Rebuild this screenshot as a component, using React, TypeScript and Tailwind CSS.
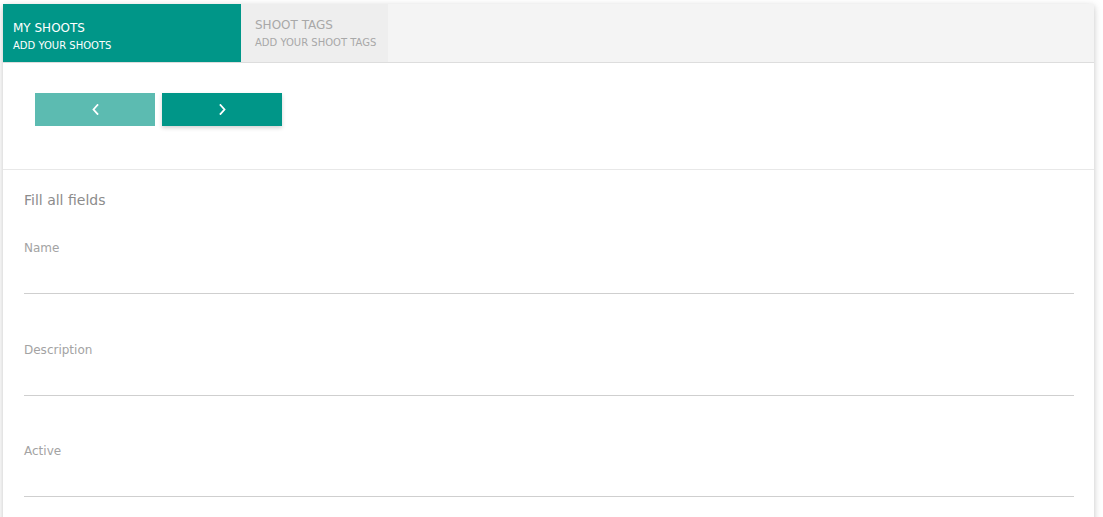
const font = { fontFamily: '"DejaVu Sans", "Noto Sans", sans-serif' };

const Chevron = ({ dir }: { dir: "left" | "right" }) => (
  <svg width="7" height="11" viewBox="0 0 7 11" fill="none">
    <polyline
      points={dir === "left" ? "5.5,1 1.5,5.5 5.5,10" : "1.5,1 5.5,5.5 1.5,10"}
      stroke="white"
      strokeWidth="1.8"
      strokeLinecap="square"
    />
  </svg>
);

const Field = ({ label, className }: { label: string; className?: string }) => (
  <div className={className}>
    <div className="h-4 text-[12px] leading-4 text-[#a3a3a3]">{label}</div>
    <input className="block h-[38px] w-full border-b border-[#cfcfcf] outline-none" />
  </div>
);

const App = () => {
  return (
    <div className="h-[517px] overflow-hidden bg-white pl-[3px] pt-[4px]" style={font}>
      <div className="min-h-[560px] w-[1091px] bg-white shadow-[0_2px_5px_rgba(0,0,0,0.14),0_2px_10px_rgba(0,0,0,0.10)]">
        <div className="flex h-[59px] border-b border-[#dddddd] bg-[#f4f4f4]">
          <div className="flex w-[238px] flex-col bg-[#009688] pl-[10px] pt-[17px] text-white">
            <span className="text-[12px] leading-[14px]">MY SHOOTS</span>
            <span className="mt-[4px] text-[10px] leading-[14px]">ADD YOUR SHOOTS</span>
          </div>
          <div className="flex w-[147px] flex-col bg-[#eeeeee] pl-[14px] pt-[14px] text-[#a8a8a8]">
            <span className="text-[12px] leading-[14px]">SHOOT TAGS</span>
            <span className="mt-[4px] text-[10px] leading-[14px]">ADD YOUR SHOOT TAGS</span>
          </div>
        </div>

        <div className="flex h-[107px] gap-[7px] border-b border-[#e8e8e8] pl-[32px] pt-[30px]">
          <button className="flex h-[33px] w-[120px] items-center justify-center bg-[#5cbbb1]">
            <Chevron dir="left" />
          </button>
          <button className="flex h-[33px] w-[120px] items-center justify-center bg-[#009688] shadow-[0_2px_4px_rgba(0,0,0,0.18)]">
            <Chevron dir="right" />
          </button>
        </div>

        <div className="pl-[21px] pr-[20px] pt-[20px]">
          <div className="mb-[30px] text-[14px] leading-5 text-[#8c8c8c]">Fill all fields</div>
          <Field label="Name" className="mb-[48px]" />
          <Field label="Description" className="mb-[47px]" />
          <Field label="Active" />
        </div>
      </div>
    </div>
  );
};

export default App;
